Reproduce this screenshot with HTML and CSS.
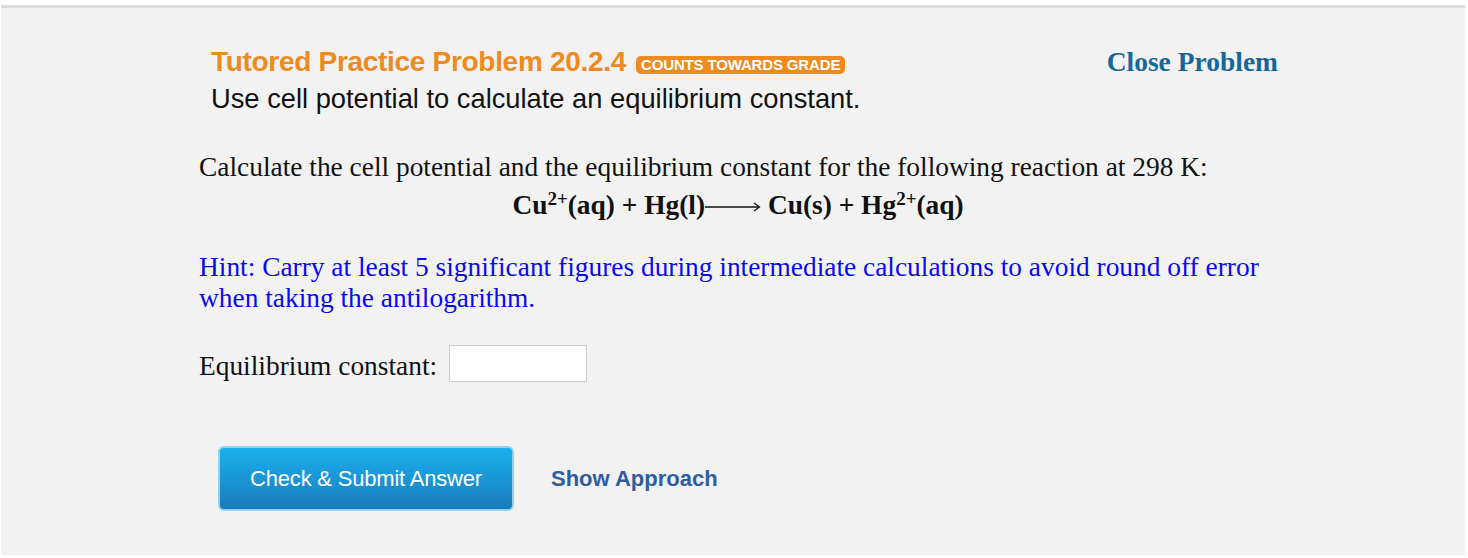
FILE: index.html
```html
<!DOCTYPE html>
<html>
<head>
<meta charset="utf-8">
<link rel="stylesheet" href="styles.css">
</head>
<body>
<div class="page">
  <div class="content">
    <div class="header">
      <div class="heading">
        <div class="title-row">
          <span class="title">Tutored Practice Problem 20.2.4</span>
          <span class="badge">COUNTS TOWARDS GRADE</span>
        </div>
        <div class="subtitle">Use cell potential to calculate an equilibrium constant.</div>
      </div>
      <a class="close">Close Problem</a>
    </div>

    <p class="question">Calculate the cell potential and the equilibrium constant for the following reaction at 298 K:</p>
    <div class="equation">Cu<sup>2+</sup>(aq) + Hg(l)<svg class="arrow" width="56" height="12" viewBox="0 0 56 12"><line x1="0" y1="6" x2="54" y2="6" stroke="#111" stroke-width="1.3"/><polyline points="49,2 54.5,6 49,10" fill="none" stroke="#111" stroke-width="1.3"/></svg> Cu(s) + Hg<sup>2+</sup>(aq)</div>

    <p class="hint">Hint: Carry at least 5 significant figures during intermediate calculations to avoid round off error when taking the antilogarithm.</p>

    <div class="answer">
      <label class="answer-label">Equilibrium constant:</label>
      <input class="answer-input" type="text">
    </div>

    <div class="actions">
      <button class="submit">Check &amp; Submit Answer</button>
      <a class="approach">Show Approach</a>
    </div>
  </div>
</div>
</body>
</html>
```

FILE: styles.css
```css
html, body {
  margin: 0;
  padding: 0;
  background: #ffffff;
}

.page {
  margin-top: 5px;
  margin-left: 1px;
  margin-right: 3px;
  border-top: 3px solid #dddddd;
  background: #f2f2f2;
  height: 550px;
  box-sizing: border-box;
}

.content {
  width: 1080px;
  margin-left: 197px;
  padding-top: 38px;
}

.header {
  display: flex;
  justify-content: space-between;
  align-items: flex-start;
  padding-left: 13px;
}

.title-row {
  display: flex;
  align-items: center;
  gap: 10px;
  height: 32px;
}

.title {
  font-family: "Liberation Sans", Arial, sans-serif;
  font-weight: bold;
  font-size: 28px;
  color: #ee8a1e;
  letter-spacing: -0.3px;
}

.badge {
  font-family: "Liberation Sans", Arial, sans-serif;
  font-weight: bold;
  font-size: 15px;
  line-height: 18px;
  color: #ffffff;
  background: #ee8a1e;
  border-radius: 5px;
  padding: 0 5px;
  margin-top: 6px;
  letter-spacing: -0.15px;
}

.subtitle {
  font-family: "Liberation Sans", Arial, sans-serif;
  font-size: 27.3px;
  line-height: 31px;
  color: #111111;
  margin-top: 5px;
}

.close {
  font-family: "Liberation Serif", "Times New Roman", serif;
  font-weight: bold;
  font-size: 27.5px;
  line-height: 31px;
  color: #17679a;
  margin-top: 0;
}

.question {
  font-family: "Liberation Serif", "Times New Roman", serif;
  font-size: 27.4px;
  line-height: 31px;
  color: #111111;
  margin: 38px 0 0 1px;
}

.equation {
  font-family: "Liberation Serif", "Times New Roman", serif;
  font-weight: bold;
  font-size: 27.4px;
  color: #111111;
  text-align: center;
  line-height: 31px;
  margin-top: 7px;
}

.equation sup {
  font-size: 19px;
  line-height: 0;
  vertical-align: 9px;
}

.arrow {
  vertical-align: 1px;
}

.hint {
  font-family: "Liberation Serif", "Times New Roman", serif;
  font-size: 27.4px;
  line-height: 31px;
  color: #0a0af0;
  margin: 31px 0 0 1px;
}

.answer {
  display: flex;
  align-items: center;
  gap: 12px;
  margin-top: 31px;
  margin-left: 1px;
}

.answer-label {
  font-family: "Liberation Serif", "Times New Roman", serif;
  font-size: 27.4px;
  line-height: 31px;
  padding-top: 6px;
  color: #111111;
}

.answer-input {
  width: 138px;
  height: 37px;
  box-sizing: border-box;
  border: 1px solid #cccccc;
  background: #ffffff;
  margin: 0;
  padding: 0;
}

.actions {
  display: flex;
  align-items: center;
  gap: 37px;
  margin-top: 64px;
  margin-left: 20px;
}

.submit {
  width: 296px;
  height: 65px;
  border: 2px solid #8fd3f0;
  border-radius: 6px;
  background: linear-gradient(to bottom, #19b1ee 0%, #1a96d6 50%, #1a7cba 100%);
  color: #ffffff;
  font-family: "Liberation Sans", Arial, sans-serif;
  font-size: 22px;
  letter-spacing: -0.2px;
  padding: 0;
  box-sizing: border-box;
}

.approach {
  font-family: "Liberation Sans", Arial, sans-serif;
  font-weight: bold;
  font-size: 22px;
  color: #2f5d9e;
}
```
